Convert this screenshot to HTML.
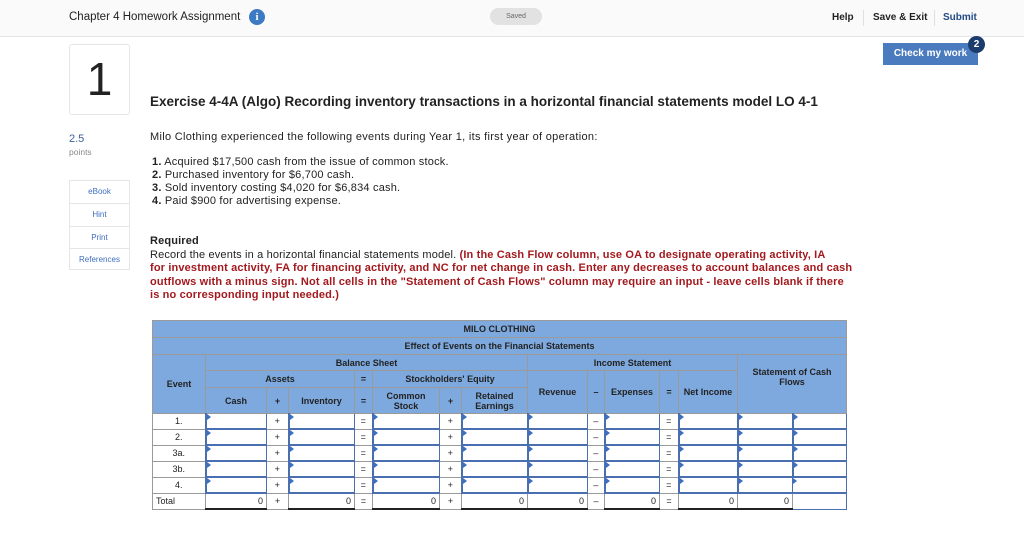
<!DOCTYPE html>
<html><head><meta charset="utf-8"><style>
body{margin:0;width:1024px;height:535px;background:#fff;font-family:"Liberation Sans",sans-serif;color:#222;position:relative;overflow:hidden}
.a{position:absolute}
.top{left:0;top:0;width:1024px;height:36px;background:#fafafa;border-bottom:1px solid #e6e6e6}
table{border-collapse:collapse;table-layout:fixed;position:absolute;left:152px;top:320px;font-size:9px;line-height:10px}
td{border:1px solid #9a9a9a;padding:0;text-align:center;font-weight:bold;overflow:hidden;white-space:nowrap}
.h td{background:#7ea9de}
.d td{background:#fff;font-weight:normal;height:14px}
.d td.i{border:1px solid #4a6fb0;border-width:1px 1px 2px 2px;position:relative}
.d td.i:before{content:"";position:absolute;left:0;top:0;border-left:4px solid #3c6ec0;border-top:3px solid transparent;border-bottom:3px solid transparent}
.d td.r{text-align:right;padding-right:3px;border-bottom:2px solid #222}
.d td.e{text-align:left;padding-left:3px}
.d td.c{text-align:center}
</style></head><body>
<div class="a top"></div>
<div class="a" style="left:69px;top:11px;font-size:11.5px">Chapter 4 Homework Assignment</div>
<div class="a" style="left:249px;top:9px;width:16px;height:16px;border-radius:50%;background:#3d7ac4;color:#fff;font-size:11px;font-weight:bold;text-align:center;line-height:16px;font-family:'Liberation Serif',serif">i</div>
<div class="a" style="left:490px;top:8px;width:52px;height:17px;border-radius:9px;background:#e2e2e2;color:#666;font-size:7px;text-align:center;line-height:17px">Saved</div>
<div class="a" style="left:832px;top:12px;font-size:10px;font-weight:bold">Help</div>
<div class="a" style="left:863px;top:10px;width:1px;height:16px;background:#e0e0e0"></div>
<div class="a" style="left:873px;top:12px;font-size:10px;font-weight:bold">Save &amp; Exit</div>
<div class="a" style="left:934px;top:10px;width:1px;height:16px;background:#e0e0e0"></div>
<div class="a" style="left:943px;top:12px;font-size:10px;font-weight:bold;color:#234a86">Submit</div>
<div class="a" style="left:883px;top:43px;width:95px;height:22px;background:#4a7bbf;color:#fff;font-size:10px;font-weight:bold;text-align:center;line-height:22px">Check my work</div>
<div class="a" style="left:968px;top:36px;width:17px;height:17px;border-radius:50%;background:#1d3c6e;color:#fff;font-size:10px;font-weight:bold;text-align:center;line-height:17px">2</div>
<div class="a" style="left:69px;top:44px;width:59px;height:69px;border:1px solid #e6e6e6;border-radius:3px;font-size:46px;text-align:center;line-height:69px">1</div>
<div class="a" style="left:150px;top:94px;font-size:13.5px;font-weight:bold">Exercise 4-4A (Algo) Recording inventory transactions in a horizontal financial statements model LO 4-1</div>
<div class="a" style="left:69px;top:133px;font-size:11px;color:#3d5e9c">2.5</div>
<div class="a" style="left:69px;top:147px;font-size:8.5px;color:#888">points</div>
<div class="a" style="left:69px;top:180px;width:59px;height:88px;border:1px solid #e6e6e6;font-size:8px;color:#3d6ec0;text-align:center">
<div style="height:22px;line-height:22px;border-bottom:1px solid #e6e6e6">eBook</div>
<div style="height:22px;line-height:22px;border-bottom:1px solid #e6e6e6">Hint</div>
<div style="height:21px;line-height:21px;border-bottom:1px solid #e6e6e6">Print</div>
<div style="height:21px;line-height:21px">References</div></div>
<div class="a" style="left:150px;top:131px;font-size:11px;letter-spacing:0.3px">Milo Clothing experienced the following events during Year 1, its first year of operation:</div>
<div class="a" style="left:152px;top:156px;font-size:11px;line-height:13px;letter-spacing:0.2px"><b>1.</b> Acquired $17,500 cash from the issue of common stock.<br><b>2.</b> Purchased inventory for $6,700 cash.<br><b>3.</b> Sold inventory costing $4,020 for $6,834 cash.<br><b>4.</b> Paid $900 for advertising expense.</div>
<div class="a" style="left:150px;top:235px;font-size:11px;line-height:13.5px;width:760px;white-space:nowrap;letter-spacing:0.15px"><b>Required</b><br>Record the events in a horizontal financial statements model. <b style="color:#a3191e">(In the Cash Flow column, use OA to designate operating activity, IA<br>for investment activity, FA for financing activity, and NC for net change in cash. Enter any decreases to account balances and cash<br>outflows with a minus sign. Not all cells in the "Statement of Cash Flows" column may require an input - leave cells blank if there<br>is no corresponding input needed.)</b></div>
<table>
<colgroup><col style="width:53px"><col style="width:61px"><col style="width:22px"><col style="width:66px"><col style="width:18px"><col style="width:67px"><col style="width:22px"><col style="width:66px"><col style="width:60px"><col style="width:17px"><col style="width:55px"><col style="width:19px"><col style="width:59px"><col style="width:55px"><col style="width:54px"></colgroup>
<tr class="h"><td colspan="15" style="height:16px">MILO CLOTHING</td></tr>
<tr class="h"><td colspan="15" style="height:16px">Effect of Events on the Financial Statements</td></tr>
<tr class="h"><td rowspan="3">Event</td><td colspan="7" style="height:15px">Balance Sheet</td><td colspan="5">Income Statement</td><td colspan="2" rowspan="3" style="vertical-align:top;padding-top:12px">Statement of Cash<br>Flows</td></tr>
<tr class="h"><td colspan="3" style="height:16px">Assets</td><td>=</td><td colspan="3">Stockholders' Equity</td><td rowspan="2">Revenue</td><td rowspan="2">–</td><td rowspan="2">Expenses</td><td rowspan="2">=</td><td rowspan="2">Net Income</td></tr>
<tr class="h"><td style="height:25px">Cash</td><td>+</td><td>Inventory</td><td>=</td><td>Common<br>Stock</td><td>+</td><td>Retained<br>Earnings</td></tr>
<tr class="d"><td class="c">1.</td><td class="i"></td><td>+</td><td class="i"></td><td>=</td><td class="i"></td><td>+</td><td class="i"></td><td class="i"></td><td>–</td><td class="i"></td><td>=</td><td class="i"></td><td class="i"></td><td class="i"></td></tr>
<tr class="d"><td class="c">2.</td><td class="i"></td><td>+</td><td class="i"></td><td>=</td><td class="i"></td><td>+</td><td class="i"></td><td class="i"></td><td>–</td><td class="i"></td><td>=</td><td class="i"></td><td class="i"></td><td class="i"></td></tr>
<tr class="d"><td class="c">3a.</td><td class="i"></td><td>+</td><td class="i"></td><td>=</td><td class="i"></td><td>+</td><td class="i"></td><td class="i"></td><td>–</td><td class="i"></td><td>=</td><td class="i"></td><td class="i"></td><td class="i"></td></tr>
<tr class="d"><td class="c">3b.</td><td class="i"></td><td>+</td><td class="i"></td><td>=</td><td class="i"></td><td>+</td><td class="i"></td><td class="i"></td><td>–</td><td class="i"></td><td>=</td><td class="i"></td><td class="i"></td><td class="i"></td></tr>
<tr class="d"><td class="c">4.</td><td class="i"></td><td>+</td><td class="i"></td><td>=</td><td class="i"></td><td>+</td><td class="i"></td><td class="i"></td><td>–</td><td class="i"></td><td>=</td><td class="i"></td><td class="i"></td><td class="i" style="border-left-width:1px"></td></tr>
<tr class="d"><td class="e" style="height:15px">Total</td><td class="r">0</td><td>+</td><td class="r">0</td><td>=</td><td class="r">0</td><td>+</td><td class="r">0</td><td class="r">0</td><td>–</td><td class="r">0</td><td>=</td><td class="r">0</td><td class="r">0</td><td style="border:1px solid #4a6fb0"></td></tr>
</table>
</body></html>
